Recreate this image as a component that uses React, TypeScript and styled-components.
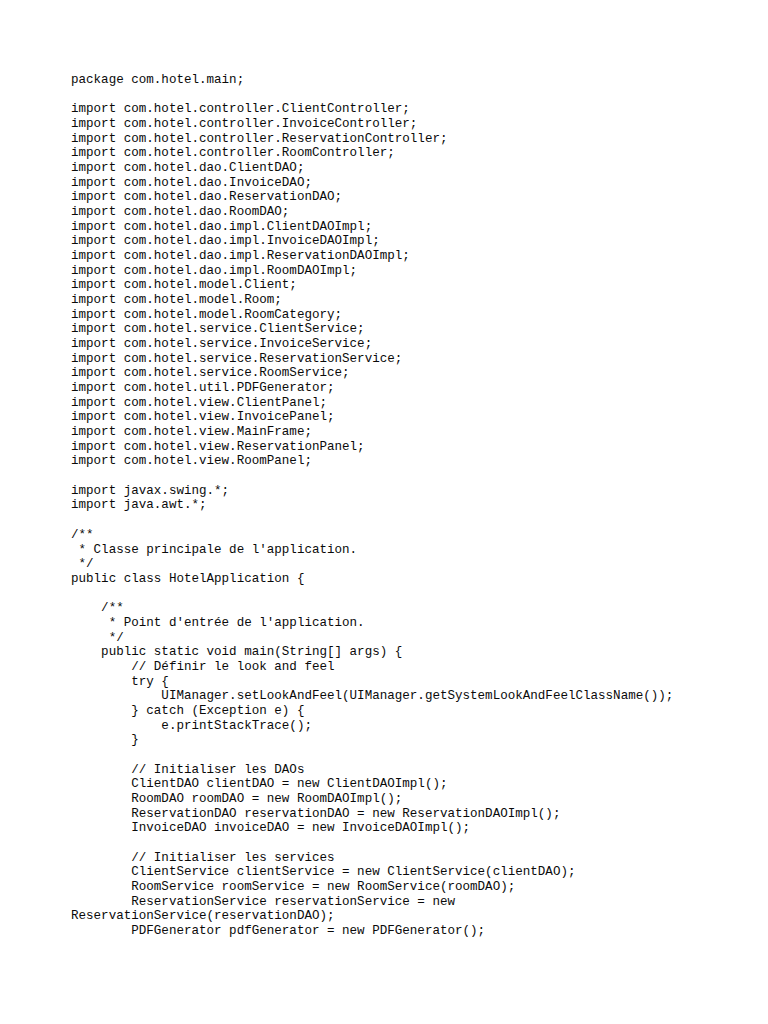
import React from "react";
import styled, { createGlobalStyle } from "styled-components";

const Global = createGlobalStyle`
  html, body { margin: 0; padding: 0; background: #ffffff; }
`;

const Page = styled.main`
  width: 768px;
  min-height: 1024px;
  box-sizing: border-box;
  padding: 73px 0 0 71px;
  background: #ffffff;
`;

const Code = styled.pre`
  margin: 0;
  font-family: "Liberation Mono", "DejaVu Sans Mono", monospace;
  font-size: 12.56px;
  line-height: 14.67px;
  color: #0a0a0a;
  white-space: pre;
`;

const source = `package com.hotel.main;

import com.hotel.controller.ClientController;
import com.hotel.controller.InvoiceController;
import com.hotel.controller.ReservationController;
import com.hotel.controller.RoomController;
import com.hotel.dao.ClientDAO;
import com.hotel.dao.InvoiceDAO;
import com.hotel.dao.ReservationDAO;
import com.hotel.dao.RoomDAO;
import com.hotel.dao.impl.ClientDAOImpl;
import com.hotel.dao.impl.InvoiceDAOImpl;
import com.hotel.dao.impl.ReservationDAOImpl;
import com.hotel.dao.impl.RoomDAOImpl;
import com.hotel.model.Client;
import com.hotel.model.Room;
import com.hotel.model.RoomCategory;
import com.hotel.service.ClientService;
import com.hotel.service.InvoiceService;
import com.hotel.service.ReservationService;
import com.hotel.service.RoomService;
import com.hotel.util.PDFGenerator;
import com.hotel.view.ClientPanel;
import com.hotel.view.InvoicePanel;
import com.hotel.view.MainFrame;
import com.hotel.view.ReservationPanel;
import com.hotel.view.RoomPanel;

import javax.swing.*;
import java.awt.*;

/**
 * Classe principale de l'application.
 */
public class HotelApplication {

    /**
     * Point d'entrée de l'application.
     */
    public static void main(String[] args) {
        // Définir le look and feel
        try {
            UIManager.setLookAndFeel(UIManager.getSystemLookAndFeelClassName());
        } catch (Exception e) {
            e.printStackTrace();
        }

        // Initialiser les DAOs
        ClientDAO clientDAO = new ClientDAOImpl();
        RoomDAO roomDAO = new RoomDAOImpl();
        ReservationDAO reservationDAO = new ReservationDAOImpl();
        InvoiceDAO invoiceDAO = new InvoiceDAOImpl();

        // Initialiser les services
        ClientService clientService = new ClientService(clientDAO);
        RoomService roomService = new RoomService(roomDAO);
        ReservationService reservationService = new
ReservationService(reservationDAO);
        PDFGenerator pdfGenerator = new PDFGenerator();`;

export default function App() {
  return (
    <>
      <Global />
      <Page>
        <Code>{source}</Code>
      </Page>
    </>
  );
}
